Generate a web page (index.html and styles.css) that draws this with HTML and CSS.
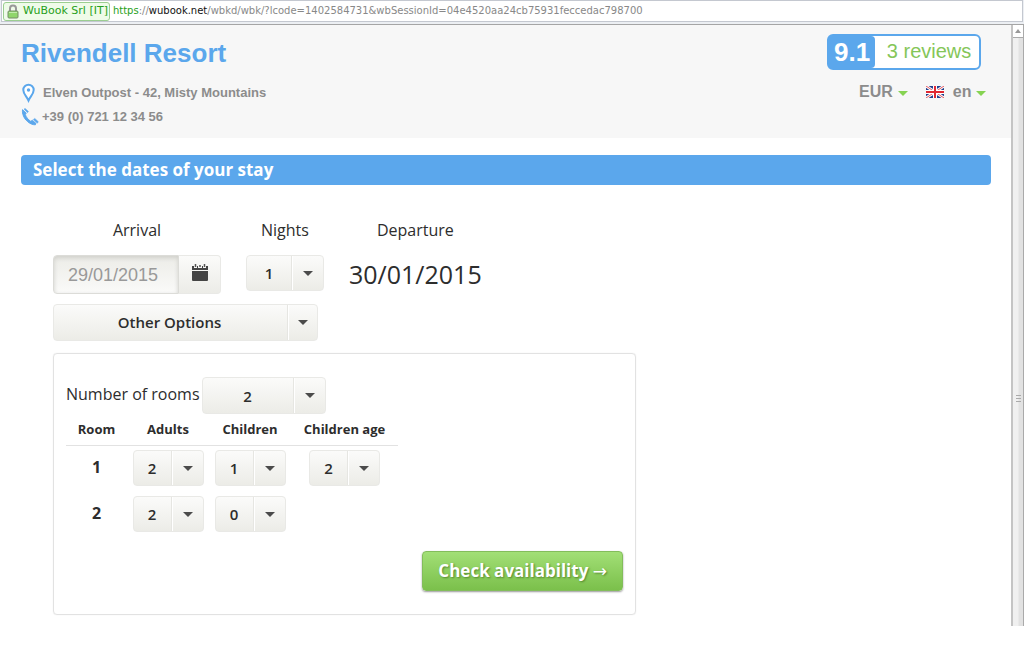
FILE: index.html
```html
<!DOCTYPE html>
<html lang="en">
<head>
<meta charset="utf-8">
<title>Rivendell Resort</title>
<link rel="stylesheet" href="styles.css">
</head>
<body>
<div class="address-bar">
  <div class="address-field">
    <span class="identity">
      <svg class="lock" viewBox="0 0 12 15" width="12" height="15" aria-hidden="true">
        <path d="M3 8V4.500a3 3 0 0 1 6 0V8" fill="none" stroke="#999" stroke-width="2"/>
        <rect x="1" y="7" width="10" height="7" rx="1" fill="#8fd66b" stroke="#748d68"/>
        <path d="M2 8.500h8" stroke="#c0ecab"/>
      </svg>
      WuBook Srl [IT]
    </span>
    <span class="url"><span class="secure">https</span>://<span class="host">wubook.net</span>/wbkd/wbk/?lcode=1402584731&amp;wbSessionId=04e4520aa24cb75931feccedac798700</span>
  </div>
</div>
<div class="viewport">
  <div class="page">
    <header class="header">
      <div class="hotel">
        <h1>Rivendell Resort</h1>
        <p class="contact">
          <svg viewBox="0 0 16 20" width="16" height="20" aria-hidden="true">
            <path d="M7.500 17.500C5.800 13.500 2.300 11 2.300 7a5.200 5.200 0 0 1 10.400 0C12.700 11 9.200 13.500 7.500 17.500z" fill="#fff" stroke="#5ba7ec" stroke-width="2"/>
            <circle cx="7.500" cy="7" r="1.700" fill="#5ba7ec"/>
          </svg>
          Elven Outpost - 42, Misty Mountains
        </p>
        <p class="contact">
          <svg viewBox="0 0 18 18" width="18" height="18" aria-hidden="true">
            <path d="M1.500 1.700C1 6 3 10.500 6.500 13.500c2.500 2.200 5 3.300 7.800 3.300l.7-1.300-3.500-3.200-1.800 1C7 11.500 5 9 4.300 6.400l.9-1.100z" fill="#5ba7ec" stroke="#5ba7ec"/>
            <path d="M3 1 4.200.5 7.500 3.600 6.400 4.700zM12.400 11.400l1.400-1 3.500 3.300-1 1.500z" fill="#5ba7ec" stroke="#5ba7ec" stroke-width=".5"/>
          </svg>
          +39 (0) 721 12 34 56
        </p>
      </div>
      <div class="tools">
        <a class="rating" href="#reviews"><strong>9.1</strong><span>3 reviews</span></a>
        <div class="switches">
          <button type="button" class="switch">EUR</button>
          <button type="button" class="switch">
            <svg viewBox="0 0 18 12" width="18" height="12" aria-hidden="true">
              <path fill="#24408e" d="M0 0h18v12H0z"/>
              <path d="M0 0 18 12M18 0 0 12" stroke="#fff" stroke-width="2.800"/>
              <path d="M0 0 18 12M18 0 0 12" stroke="#e0444b" stroke-width=".9"/>
              <path d="M9 0v12M0 6h18" stroke="#fff" stroke-width="4"/>
              <path d="M9 0v12M0 6h18" stroke="#e02832" stroke-width="2"/>
            </svg>
            <span>en</span>
          </button>
        </div>
      </div>
    </header>
    <main class="main">
      <h2>Select the dates of your stay</h2>
      <form class="booking">
        <div class="dates">
          <div class="field arrival">
            <label for="arrival">Arrival</label>
            <div class="date-group">
              <input id="arrival" type="text" value="29/01/2015">
              <button type="button" aria-label="Open calendar">
                <svg viewBox="0 0 16 17" width="16" height="17" aria-hidden="true">
                  <path d="M0 2h2v2h3V2h1v2h4V2h1v2h3V2h2v4H0zM0 7h16v9q0 1-1 1H1q-1 0-1-1z" fill="#444"/>
                  <path d="M3.500 0v3M8 1v2M12.500 0v3" stroke="#555" stroke-width="1.500"/>
                </svg>
              </button>
            </div>
          </div>
          <div class="field nights">
            <label for="nights">Nights</label>
            <div class="select"><select id="nights"><option>1</option><option>2</option></select></div>
          </div>
          <div class="field">
            <label for="departure">Departure</label>
            <output id="departure">30/01/2015</output>
          </div>
        </div>
        <button type="button" class="select options" aria-expanded="true"><span>Other Options</span></button>
        <section class="card">
          <div class="room-count">
            <label for="rooms">Number of rooms</label>
            <div class="select"><select id="rooms"><option>1</option><option selected>2</option></select></div>
          </div>
          <table class="rooms">
            <thead>
              <tr><th scope="col" class="col-room">Room</th><th scope="col" class="col-guests">Adults</th><th scope="col" class="col-guests">Children</th><th scope="col" class="col-age">Children age</th></tr>
            </thead>
            <tbody>
              <tr>
                <th scope="row">1</th>
                <td><div class="select"><select aria-label="Adults, room 1"><option>2</option></select></div></td>
                <td><div class="select"><select aria-label="Children, room 1"><option>1</option></select></div></td>
                <td><div class="select"><select aria-label="Children age, room 1"><option>2</option></select></div></td>
              </tr>
              <tr>
                <th scope="row">2</th>
                <td><div class="select"><select aria-label="Adults, room 2"><option>2</option></select></div></td>
                <td><div class="select"><select aria-label="Children, room 2"><option>0</option></select></div></td>
                <td></td>
              </tr>
            </tbody>
          </table>
          <div class="actions"><button type="submit" class="submit">Check availability <span class="arrow">→</span></button></div>
        </section>
      </form>
    </main>
  </div>
  <div class="scrollbar" aria-hidden="true">
    <div class="scroll-up"></div>
    <div class="thumb"><i></i><i></i><i></i></div>
  </div>
</div>
</body>
</html>
```
FILE: styles.css
```css
* { box-sizing: border-box; }
body { margin: 0; background: #fff; color: #2d2d2d; font-family: "Open Sans", "Noto Sans", sans-serif; font-size: 16px; line-height: 24px; }
h1, h2, p { margin: 0; }
button, input, select { font: inherit; color: inherit; margin: 0; }

/* Browser address bar */
.address-bar { height: 25px; padding: 0 1px; background: #eceff3; border-bottom: 1px solid #a5a5a5; font-family: "DejaVu Sans", sans-serif; }
.address-field { display: flex; align-items: center; gap: 3px; height: 22px; background: #fff; border: 1px solid #c4c8d0; }
.identity { display: flex; align-items: center; gap: 4px; height: 19px; margin-left: 1px; padding: 0 1px 0 3px; background: #effbe9; border: 1px solid #9bce91; border-radius: 3px; color: #27a020; font-size: 11px; white-space: nowrap; }
.url { color: #888; font-size: 10px; white-space: nowrap; }
.secure { color: #27a020; }
.host { color: #111; }

.viewport { display: flex; }
.page { flex: 1; min-width: 0; }

/* Hotel header */
.header { display: flex; justify-content: space-between; height: 113px; padding: 9px 25px 0 21px; background: #f7f7f7; font-family: "Liberation Sans", Arial, sans-serif; }
h1 { margin: 2px 0 11px; color: #5ba7ec; font-size: 26px; line-height: 34px; }
.contact { display: flex; align-items: center; gap: 6px; height: 24px; color: #8c8c8c; font-size: 13px; font-weight: bold; }
.contact + .contact { gap: 3px; }
.rating { display: flex; width: 154px; height: 36px; background: #fff; border: 2px solid #5ba7ec; border-radius: 6px; color: #85c659; font-size: 20px; line-height: 30px; text-decoration: none; }
.rating strong { padding: 0 5px; background: #5ba7ec; border-radius: 0 4px 4px 0; color: #fff; font-size: 26px; line-height: 32px; }
.rating span { flex: 1; padding-left: 4px; text-align: center; }
.switches { display: flex; gap: 18px; margin-top: 10px; padding-left: 32px; }
.switch { display: flex; align-items: center; gap: 5px; height: 24px; padding: 0; border: 0; background: none; color: #8c8c8c; font-size: 16px; font-weight: bold; }
.switch span { margin-left: 4px; }
.switch::after { content: ""; margin-top: 3px; border: 5px solid transparent; border-top-color: #86d352; border-bottom: 0; }
.tools { display: flex; flex-direction: column; width: 159px; }

/* Booking form */
.main { padding: 17px 20px 11px 21px; }
h2 { height: 30px; padding-left: 12px; background: #5ba7ec; border-radius: 4px; color: #fff; font-size: 17px; line-height: 30px; }
.booking { padding: 33px 0 0 32px; }
.dates { display: flex; gap: 25px; }
.field { display: flex; flex-direction: column; align-items: center; gap: 13px; }
.arrival { width: 168px; }
.nights { width: 78px; }
.date-group { display: flex; width: 100%; height: 39px; }
.date-group input { flex: 1; min-width: 0; padding: 0 0 0 14px; background: linear-gradient(#ecece7, #fafaf9); border: 1px solid #dcdcd8; border-radius: 4px 0 0 4px; box-shadow: inset 0 2px 4px #d0d0cb; color: #999; font-family: "Liberation Sans", Arial, sans-serif; font-size: 18px; }
.date-group button { width: 42px; padding: 0; background: linear-gradient(#fbfbfa, #ecece7); border: 1px solid #e9e9e6; border-left: 0; border-radius: 0 4px 4px 0; }
.select { position: relative; width: 100%; height: 36px; background: linear-gradient(#fbfbfa, #ecece7); border: 1px solid #e9e9e6; border-radius: 4px; font-weight: 600; }
.select::before { content: ""; position: absolute; top: 0; right: 31px; bottom: 0; width: 1px; background: #e6e6e2; box-shadow: 1px 0 #fff; }
.select::after { content: ""; position: absolute; top: 15px; right: 10px; border: 5px solid transparent; border-top-color: #4b4b4b; border-bottom: 0; pointer-events: none; }
.select select { width: 100%; height: 100%; padding: 0 32px 0 0; appearance: none; border: 0; background: none; font-size: 15px; text-align: center; text-align-last: center; }
#departure { font-size: 25px; line-height: 38px; }
.options { display: block; width: 265px; height: 37px; margin-top: 10px; padding: 0 32px 2px 0; font-size: 15px; }
.options::before, .options::after { right: 29px; }
.options::after { right: 9px; }
.card { width: 583px; max-width: 100%; margin-top: 12px; padding: 23px 12px; border: 1px solid #e2e2e2; border-radius: 4px; box-shadow: 0 0 1px #ddd; }
.room-count { display: flex; align-items: center; gap: 2px; }
.room-count label { padding-bottom: 4px; }
.room-count .select { width: 124px; height: 37px; }
.rooms { border-collapse: collapse; table-layout: fixed; width: 332px; }
.rooms th, .rooms td { padding: 0; text-align: center; }
.rooms thead th { height: 31px; border-bottom: 1px solid #e2e2e2; font-size: 13px; white-space: nowrap; }
.rooms tbody tr { height: 46px; }
.rooms tbody th { padding-bottom: 2px; }
.rooms .select { width: 71px; margin: 0 auto; }
.col-room { width: 61px; }
.col-guests { width: 82px; }
.actions { display: flex; justify-content: flex-end; margin-top: 14px; }
.submit { height: 40px; padding: 0 15px; background: linear-gradient(#a2df76, #7bc04b); border: 1px solid #83bd5b; border-radius: 4px; box-shadow: 0 1px 2px #999; color: #fff; font-size: 17px; font-weight: bold; text-shadow: 1px 1px 2px #55882f; white-space: nowrap; }
.arrow { font-family: "DejaVu Sans", sans-serif; font-weight: normal; }

/* Scrollbar */
.scrollbar { display: flex; flex-direction: column; width: 13px; background: #eee; border-left: 2px solid #c4c4c4; border-right: 1px solid #aaa; }
.scroll-up { display: grid; place-items: center; height: 13px; background: #fff; border-bottom: 1px solid #aaa; }
.scroll-up::after { content: ""; border: 3px solid transparent; border-bottom: 4px solid #999; border-top: 0; }
.thumb { flex: 1; display: flex; flex-direction: column; align-items: center; gap: 2px; padding-top: 357px; background: linear-gradient(90deg, #f0f0f0 50%, #e2e2e2 60%); }
.thumb i { width: 5px; height: 1px; background: #aaa; }
```
